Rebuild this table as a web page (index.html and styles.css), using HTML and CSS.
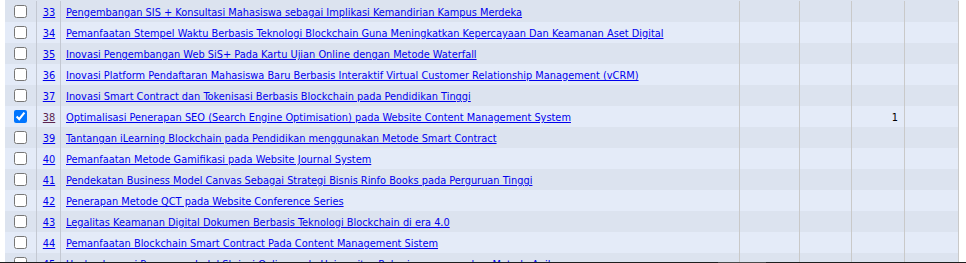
FILE: index.html
```html
<!DOCTYPE html>
<html lang="id">
<head>
<meta charset="utf-8">
<title>Daftar Judul</title>
<link rel="stylesheet" href="styles.css">
</head>
<body>
<div class="list">
  <div class="row odd first"><div class="c chk"><input type="checkbox"></div><div class="c num"><a href="#">33</a></div><div class="c title"><a href="#">Pengembangan SIS + Konsultasi Mahasiswa sebagai Implikasi Kemandirian Kampus Merdeka</a></div><div class="c"></div><div class="c"></div><div class="c val"></div><div class="c"></div></div>
  <div class="row even"><div class="c chk"><input type="checkbox"></div><div class="c num"><a href="#">34</a></div><div class="c title"><a href="#">Pemanfaatan Stempel Waktu Berbasis Teknologi Blockchain Guna Meningkatkan Kepercayaan Dan Keamanan Aset Digital</a></div><div class="c"></div><div class="c"></div><div class="c val"></div><div class="c"></div></div>
  <div class="row odd"><div class="c chk"><input type="checkbox"></div><div class="c num"><a href="#">35</a></div><div class="c title"><a href="#">Inovasi Pengembangan Web SiS+ Pada Kartu Ujian Online dengan Metode Waterfall</a></div><div class="c"></div><div class="c"></div><div class="c val"></div><div class="c"></div></div>
  <div class="row even"><div class="c chk"><input type="checkbox"></div><div class="c num"><a href="#">36</a></div><div class="c title"><a href="#">Inovasi Platform Pendaftaran Mahasiswa Baru Berbasis Interaktif Virtual Customer Relationship Management (vCRM)</a></div><div class="c"></div><div class="c"></div><div class="c val"></div><div class="c"></div></div>
  <div class="row odd"><div class="c chk"><input type="checkbox"></div><div class="c num"><a href="#">37</a></div><div class="c title"><a href="#">Inovasi Smart Contract dan Tokenisasi Berbasis Blockchain pada Pendidikan Tinggi</a></div><div class="c"></div><div class="c"></div><div class="c val"></div><div class="c"></div></div>
  <div class="row even"><div class="c chk"><input type="checkbox" checked></div><div class="c num"><a href="#" class="visited">38</a></div><div class="c title"><a href="#">Optimalisasi Penerapan SEO (Search Engine Optimisation) pada Website Content Management System</a></div><div class="c"></div><div class="c"></div><div class="c val">1</div><div class="c"></div></div>
  <div class="row odd"><div class="c chk"><input type="checkbox"></div><div class="c num"><a href="#">39</a></div><div class="c title"><a href="#">Tantangan iLearning Blockchain pada Pendidikan menggunakan Metode Smart Contract</a></div><div class="c"></div><div class="c"></div><div class="c val"></div><div class="c"></div></div>
  <div class="row even"><div class="c chk"><input type="checkbox"></div><div class="c num"><a href="#">40</a></div><div class="c title"><a href="#">Pemanfaatan Metode Gamifikasi pada Website Journal System</a></div><div class="c"></div><div class="c"></div><div class="c val"></div><div class="c"></div></div>
  <div class="row odd"><div class="c chk"><input type="checkbox"></div><div class="c num"><a href="#">41</a></div><div class="c title"><a href="#">Pendekatan Business Model Canvas Sebagai Strategi Bisnis Rinfo Books pada Perguruan Tinggi</a></div><div class="c"></div><div class="c"></div><div class="c val"></div><div class="c"></div></div>
  <div class="row even"><div class="c chk"><input type="checkbox"></div><div class="c num"><a href="#">42</a></div><div class="c title"><a href="#">Penerapan Metode QCT pada Website Conference Series</a></div><div class="c"></div><div class="c"></div><div class="c val"></div><div class="c"></div></div>
  <div class="row odd"><div class="c chk"><input type="checkbox"></div><div class="c num"><a href="#">43</a></div><div class="c title"><a href="#">Legalitas Keamanan Digital Dokumen Berbasis Teknologi Blockchain di era 4.0</a></div><div class="c"></div><div class="c"></div><div class="c val"></div><div class="c"></div></div>
  <div class="row even"><div class="c chk"><input type="checkbox"></div><div class="c num"><a href="#">44</a></div><div class="c title"><a href="#">Pemanfaatan Blockchain Smart Contract Pada Content Management Sistem</a></div><div class="c"></div><div class="c"></div><div class="c val"></div><div class="c"></div></div>
  <div class="row odd"><div class="c chk"><input type="checkbox"></div><div class="c num"><a href="#">45</a></div><div class="c title"><a href="#">Usulan Inovasi Penamaan Judul Skripsi Online pada Universitas Raharja menggunakan Metode Agile</a></div><div class="c"></div><div class="c"></div><div class="c val"></div><div class="c"></div></div>
</div>
<div class="hscroll"></div>
</body>
</html>
```
FILE: styles.css
```css
html, body {
  margin: 0;
  padding: 0;
  background: #ffffff;
  overflow: hidden;
}
body {
  font-family: "DejaVu Sans Condensed", "DejaVu Sans", sans-serif;
  font-stretch: condensed;
  font-size: 10.9px;
  color: #000;
}
.list {
  margin-left: 5px;
  width: 954px;
}
.row {
  display: grid;
  grid-template-columns: 32px 24px 679px 60px 52px 53px 54px;
  height: 21px;
}
.row.first {
  height: 22px;
  padding-top: 1px;
  box-sizing: border-box;
}
.row.odd { background: #dce3ef; }
.row.even { background: #e4ebf8; }
.c {
  box-sizing: border-box;
  border-right: 1px solid #c9c9c9;
  line-height: 13px;
  padding-top: 5px;
  white-space: nowrap;
  overflow: hidden;
}
.chk, .num { border-right-color: #c3c8d2; }
.chk {
  padding: 4px 0 0 9px;
}
.chk input {
  margin: 0;
  width: 13px;
  height: 13px;
  display: block;
}
.num {
  text-align: center;
  padding-left: 1px;
}
.title {
  padding-left: 5px;
}
.val {
  text-align: right;
  padding-right: 6px;
}
a {
  color: #0000ee;
  text-decoration: underline;
}
a.visited { color: #5b2450; }
.hscroll {
  position: fixed;
  left: 0;
  right: 0;
  bottom: 0;
  height: 1px;
  background: linear-gradient(to right, #1e1e1e 0, #1e1e1e 718px, #4a4a4a 718px, #4a4a4a 766px, #1e1e1e 766px);
}
```
